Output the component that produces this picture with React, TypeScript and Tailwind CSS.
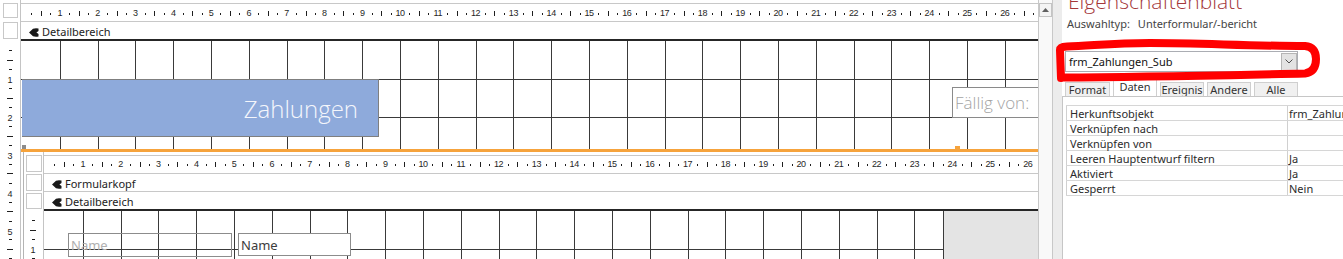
import React from "react";

const CM = 37.8;
const TICK = "#1f1f1f";
const RULER_FONT = "Liberation Sans, Arial, sans-serif";

function HRuler({ width, origin, numY }: { width: number; origin: number; numY: number }) {
  const els: React.ReactNode[] = [];
  for (let k = 1; ; k++) {
    const x = origin + (k * CM) / 4;
    if (x > width - 3) break;
    const m = k % 4;
    const px = Math.round(x);
    if (m === 0) {
      els.push(
        <text key={k} x={x} y={numY + 3.3} textAnchor="middle" fontSize={9} fontFamily={RULER_FONT} fill={TICK} letterSpacing={-0.4}>
          {k / 4}
        </text>
      );
    } else if (m === 2) {
      els.push(<rect key={k} x={px} y={numY - 2} width={1} height={5} fill={TICK} />);
    } else {
      els.push(<rect key={k} x={px} y={numY} width={1} height={2} fill={TICK} />);
    }
  }
  return (
    <svg width={width} height={17} className="block">
      {els}
    </svg>
  );
}

function VRuler({ height, width, cx, origin }: { height: number; width: number; cx: number; origin: number }) {
  const els: React.ReactNode[] = [];
  for (let k = 1; ; k++) {
    const y = origin + (k * CM) / 4;
    if (y > height + 5) break;
    const m = k % 4;
    const py = Math.round(y);
    if (m === 0) {
      els.push(
        <text key={k} x={cx} y={y + 4.5} textAnchor="middle" fontSize={9} fontFamily={RULER_FONT} fill={TICK}>
          {k / 4}
        </text>
      );
    } else if (m === 2) {
      els.push(<rect key={k} x={cx - 3} y={py} width={6} height={1} fill={TICK} />);
    } else {
      els.push(<rect key={k} x={cx - 1} y={py} width={3} height={1} fill={TICK} />);
    }
  }
  return (
    <svg width={width} height={height} className="block shrink-0">
      {els}
    </svg>
  );
}

function Grid({ width, height, ox, oy }: { width: number; height: number; ox: number; oy: number }) {
  const vs: number[] = [];
  for (let x = ox + CM; x < width; x += CM) vs.push(Math.round(x) + 0.5);
  const hs: number[] = [];
  for (let y = oy + CM; y < height; y += CM) hs.push(Math.round(y) + 0.5);
  return (
    <svg width={width} height={height} className="absolute left-0 top-0 block">
      {vs.map((x) => (
        <line key={"v" + x} x1={x} x2={x} y1={0} y2={height} stroke="#3a3a3a" strokeWidth={1} shapeRendering="crispEdges" />
      ))}
      {hs.map((y) => (
        <line key={"h" + y} x1={0} x2={width} y1={y} y2={y} stroke="#3a3a3a" strokeWidth={1} shapeRendering="crispEdges" />
      ))}
    </svg>
  );
}

function SectionIcon() {
  return (
    <svg width={10} height={9} viewBox="0 0 10 9" className="block shrink-0">
      <path d="M0 4.5 L4 0.8 Q6 0 9.5 0.5 L9.5 3 L7.4 4.5 L9.5 6 L9.5 8.5 Q6 9 4 8.2 Z" fill="#1a1a1a" />
    </svg>
  );
}

function SectionBar({ label, className }: { label: string; className: string }) {
  return (
    <div className={`flex items-center bg-white pt-[3px] ${className}`}>
      <div className="ml-[8px]">
        <SectionIcon />
      </div>
      <span className="ml-[3px] leading-[12px] text-[#222]">{label}</span>
    </div>
  );
}

const rows: [string, string][] = [
  ["Herkunftsobjekt", "frm_Zahlungen_Sub"],
  ["Verknüpfen nach", ""],
  ["Verknüpfen von", ""],
  ["Leeren Hauptentwurf filtern", "Ja"],
  ["Aktiviert", "Ja"],
  ["Gesperrt", "Nein"],
];

export default function App() {
  return (
    <div className="relative flex h-[259px] w-[1343px] overflow-hidden bg-white font-['Noto_Sans',sans-serif] text-[11px] text-[#333]">
      {/* design area */}
      <div className="flex h-full w-[1038px] shrink-0">
        {/* outer left ruler column */}
        <div className="flex w-[21px] shrink-0 flex-col border-r border-[#c4c4c4]">
          <div className="ml-[3px] mt-[3px] h-[15px] w-[15px] border border-[#c8c8c8] bg-white" />
          <div className="ml-[3px] mt-[4px] h-[17px] w-[15px] border border-[#c8c8c8] bg-white" />
          <div className="mt-[2px]">
            <VRuler height={218} width={20} cx={10} origin={0} />
          </div>
        </div>

        {/* main content */}
        <div className="flex w-[1017px] flex-col">
          <div className="mt-[3px] h-[19px] border-y border-[#c8c8c8] bg-white">
            <HRuler width={1017} origin={1} numY={9} />
          </div>
          <SectionBar label="Detailbereich" className="h-[19px] border-b-2 border-[#262626]" />

          {/* main grid */}
          <div className="relative h-[108px] shrink-0 overflow-hidden bg-white">
            <Grid width={1017} height={108} ox={1} oy={0} />
            <div className="absolute left-[1px] top-[38px] flex h-[58px] w-[357px] items-center justify-end border border-l-0 border-[#7f7f7f] bg-[#8eaadb] pr-[20px] pt-[2px]">
              <span className="font-['Open_Sans',sans-serif] text-[24px] font-light leading-[30px] text-[#f4f6fb]">Zahlungen</span>
            </div>
            <div className="absolute left-[931px] top-[46px] flex h-[31px] w-[120px] items-center border border-[#8a8a8a] bg-white pl-[2px]">
              <span className="whitespace-nowrap font-['Open_Sans',sans-serif] text-[17px] font-light leading-[22px] text-[#a3a3a3]">Fällig von:</span>
            </div>
            <div className="absolute left-[1px] top-[104px] h-[5px] w-[4px] bg-[#8c8c8c]" />
            <div className="absolute left-[934px] top-[105px] h-[4px] w-[5px] bg-[#f6a33c]" />
          </div>

          {/* orange selection line */}
          <div className="h-[3px] shrink-0 bg-[#f6a33c]" />

          {/* subform */}
          <div className="ml-[2px] flex min-h-0 flex-1 border-l border-[#b4b4b4]">
            <div className="flex w-[20px] shrink-0 flex-col border-r border-[#c4c4c4]">
              <div className="ml-[2px] mt-[3px] h-[17px] w-[16px] shrink-0 border border-[#c8c8c8] bg-white" />
              <div className="ml-[2px] mt-[2px] h-[17px] w-[16px] shrink-0 border border-[#c8c8c8] bg-white" />
              <div className="ml-[2px] mt-[2px] h-[16px] w-[16px] shrink-0 border border-[#c8c8c8] bg-white" />
              <div className="mt-[2px]">
                <VRuler height={60} width={19} cx={9} origin={0} />
              </div>
            </div>
            <div className="flex w-[994px] flex-col">
              <div className="mt-[3px] h-[19px] shrink-0 border-y border-[#c8c8c8] bg-white">
                <HRuler width={994} origin={1} numY={8} />
              </div>
              <SectionBar label="Formularkopf" className="h-[18px] shrink-0 border-b border-[#c8c8c8]" />
              <SectionBar label="Detailbereich" className="h-[19px] shrink-0 border-b-2 border-[#262626]" />
              <div className="flex min-h-0 flex-1">
                <div className="relative h-[60px] w-[900px] shrink-0 overflow-hidden border-r border-[#3a3a3a] bg-white">
                  <Grid width={900} height={60} ox={1} oy={0} />
                  <div className="absolute left-[24px] top-[22px] flex h-[24px] w-[164px] items-center border border-[#8c8c8c] pl-[2px]">
                    <span className="text-[13px] leading-[16px] text-[#b0b0b0]">Name</span>
                  </div>
                  <div className="absolute left-[194px] top-[22px] flex h-[23px] w-[113px] items-center border border-[#8c8c8c] bg-white pl-[2px]">
                    <span className="text-[13px] leading-[16px] text-[#3c3c3c]">Name</span>
                  </div>
                </div>
                <div className="flex-1 bg-[#e4e4e4]" />
              </div>
            </div>
          </div>
        </div>
      </div>

      {/* vertical scrollbar */}
      <div className="flex h-full w-[15px] shrink-0 flex-col border-x border-[#c8c8c8] bg-[#f9f9f9]">
        <div className="mt-[3px] flex h-[14px] w-[13px] items-center justify-center border border-[#c4c4c4] bg-[#f4f4f4]">
          <svg width={7} height={4} viewBox="0 0 7 4" className="block">
            <path d="M0 4 L3.5 0 L7 4 Z" fill="#606060" />
          </svg>
        </div>
      </div>

      {/* splitter */}
      <div className="h-full w-[9px] shrink-0 bg-[#ececec]" />

      {/* property sheet */}
      <div className="flex h-full w-[281px] shrink-0 flex-col bg-white">
        <div className="-mt-[9px] h-[21px] pl-[6px] font-['Open_Sans',sans-serif] text-[21px] font-light leading-[21px] whitespace-nowrap text-[#a4373a]">
          Eigenschaftenblatt
        </div>
        <div className="mt-[5px] flex h-[14px] items-center pl-[5px] leading-[14px] text-[#444]">
          <span>Auswahltyp:</span>
          <span className="ml-[8px]">Unterformular/-bericht</span>
        </div>
        <div className="ml-[3px] mt-[20px] flex h-[21px] w-[233px] items-center border border-[#abadb3] bg-white">
          <span className="pl-[3px] leading-[14px] text-[#111]">frm_Zahlungen_Sub</span>
          <div className="ml-auto mr-[0px] flex h-[18px] w-[16px] items-center justify-center border border-[#b5b5b5] bg-[#e3e3e3]">
            <svg width={8} height={5} viewBox="0 0 8 5" className="block">
              <path d="M0.5 0.5 L4 4 L7.5 0.5" fill="none" stroke="#505050" strokeWidth={1} />
            </svg>
          </div>
        </div>
        <div className="ml-[3px] mt-[10px] flex h-[14px] items-end gap-[3px]">
          <div className="flex h-[14px] w-[45px] items-center justify-center border border-b-0 border-[#cfcfcf] bg-[#f0f0f0] leading-[12px]">Format</div>
          <div className="flex h-[17px] w-[44px] items-start justify-center border border-b-0 border-[#cfcfcf] bg-white pt-[1px] leading-[12px]">Daten</div>
          <div className="flex h-[14px] w-[44px] items-center justify-center border border-b-0 border-[#cfcfcf] bg-[#f0f0f0] leading-[12px]">Ereignis</div>
          <div className="flex h-[14px] w-[44px] items-center justify-center border border-b-0 border-[#cfcfcf] bg-[#f0f0f0] leading-[12px]">Andere</div>
          <div className="flex h-[14px] w-[44px] items-center justify-center border border-b-0 border-[#cfcfcf] bg-[#f0f0f0] leading-[12px]">Alle</div>
        </div>
        <div className="flex-1 border-l border-t border-[#c6c6c6] pl-[3px] pt-[8px]">
          <div className="border-t border-[#d6d6d6]">
            {rows.map(([k, v]) => (
              <div key={k} className="flex h-[15px] border-b border-[#d6d6d6]">
                <div className="flex w-[222px] shrink-0 items-center border-x border-[#d0d0d0] pl-[3px] leading-[13px] text-[#2b2b2b]">{k}</div>
                <div className="flex flex-1 items-center overflow-hidden whitespace-nowrap pl-[1px] leading-[13px] text-[#2b2b2b]">{v}</div>
              </div>
            ))}
          </div>
        </div>
      </div>

      {/* red hand-drawn highlight */}
      <svg width={290} height={60} viewBox="0 0 290 60" className="pointer-events-none absolute left-[1050px] top-[30px] block">
        <path
          d="M 11 48 L 10 20 Q 10 16.5 17 16.5 C 40 16 62 13 100 13 C 150 13 200 16 255 16 Q 266 17 266 29 Q 266 42 255 43.5 C 180 45 100 47 12 47.5"
          fill="none"
          stroke="#ff0000"
          strokeWidth={8}
          strokeLinecap="round"
          strokeLinejoin="round"
        />
      </svg>
    </div>
  );
}
